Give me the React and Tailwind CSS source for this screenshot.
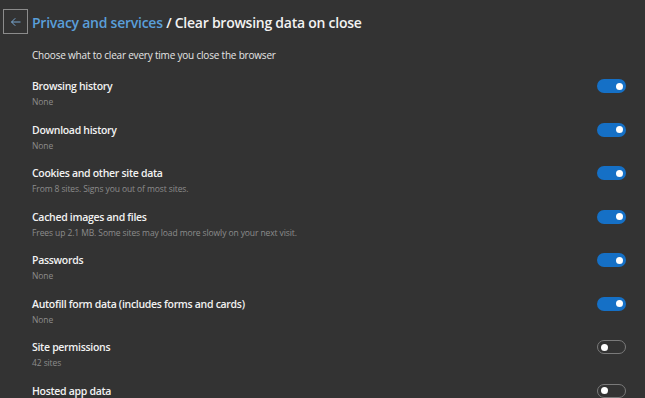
import React, { useState } from "react";

const items = [
  { title: "Browsing history", sub: "None", on: true },
  { title: "Download history", sub: "None", on: true },
  { title: "Cookies and other site data", sub: "From 8 sites. Signs you out of most sites.", on: true },
  { title: "Cached images and files", sub: "Frees up 2.1 MB. Some sites may load more slowly on your next visit.", on: true },
  { title: "Passwords", sub: "None", on: true },
  { title: "Autofill form data (includes forms and cards)", sub: "None", on: true },
  { title: "Site permissions", sub: "42 sites", on: false },
  { title: "Hosted app data", sub: "1 app", on: false },
];

function Toggle({ on, onClick }) {
  return (
    <button
      onClick={onClick}
      className={
        on
          ? "flex h-[14px] w-[29px] items-center justify-end rounded-full bg-[#1570c6] pr-[3px]"
          : "flex h-[14px] w-[29px] items-center justify-start rounded-full border border-[#7a7a7a] bg-transparent pl-[3px]"
      }
    >
      <span className="block h-[7px] w-[7px] rounded-full bg-white" />
    </button>
  );
}

export default function App() {
  const [state, setState] = useState(items.map((i) => i.on));

  return (
    <div className="h-screen overflow-hidden bg-[#333333] text-[#f2f2f2] [font-family:'Open_Sans',sans-serif]">
      <div className="flex items-center pl-[3px] pt-[9px]">
        <button className="flex h-[25px] w-[25px] items-center justify-center border border-[#8c8c8c] text-[#7fb2e0]">
          <svg width="12" height="12" viewBox="0 0 16 16" fill="none" stroke="currentColor" strokeWidth="1.2">
            <path d="M14 8H2M7 3L2 8l5 5" />
          </svg>
        </button>
        <h1 className="ml-[4px] mt-[2px] text-[14px] font-semibold tracking-[-0.25px]">
          <span className="text-[#5a9fda]">Privacy and services</span> / Clear browsing data on close
        </h1>
      </div>
      <p className="mt-[13px] pl-8 text-[10px] leading-4 tracking-[-0.2px] text-[#e6e6e6]">
        Choose what to clear every time you close the browser
      </p>
      <div className="mt-[15px] flex flex-col pl-8 pr-[19px]">
        {items.map((item, i) => (
          <div key={item.title} className="flex h-[43.5px] shrink-0 items-start justify-between">
            <div>
              <div className="text-[10.5px] font-semibold leading-4 tracking-[-0.3px]">{item.title}</div>
              <div className="mt-px text-[8.5px] leading-[14px] tracking-[-0.1px] text-[#8c8c8c]">{item.sub}</div>
            </div>
            <div className="mt-px">
              <Toggle on={state[i]} onClick={() => setState(state.map((s, j) => (j === i ? !s : s)))} />
            </div>
          </div>
        ))}
      </div>
    </div>
  );
}
